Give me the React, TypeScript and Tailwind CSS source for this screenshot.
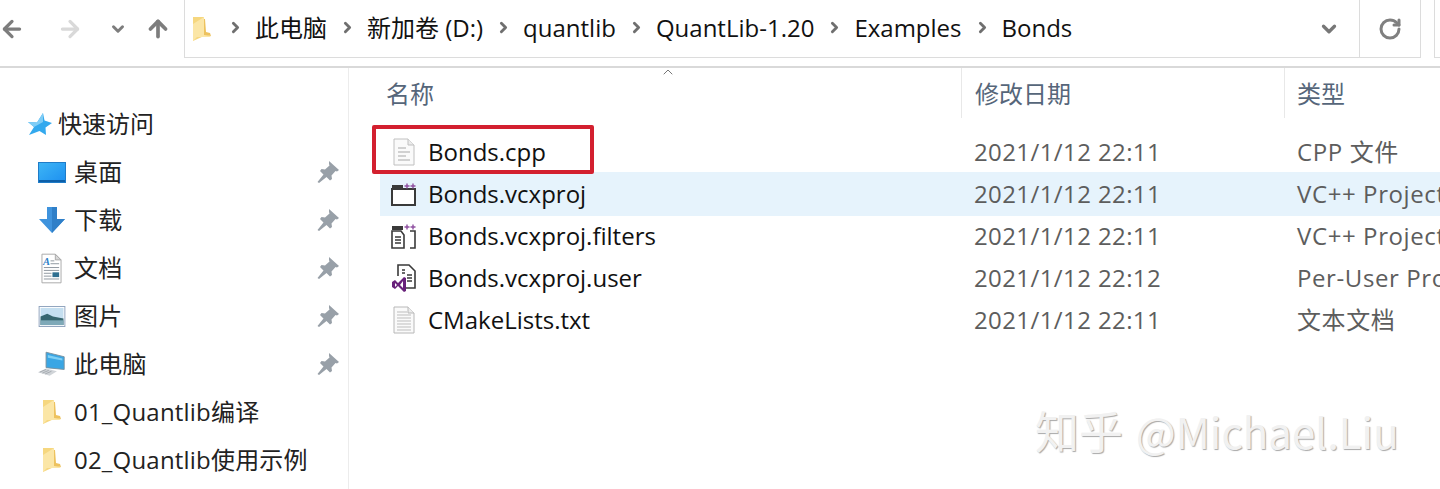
import { ArrowLeft, ArrowRight, ArrowUp, ChevronDown, ChevronRight, RotateCw } from "lucide-react";

const uiFont = "font-['Open_Sans','Noto_Sans_CJK_SC',sans-serif]";

function FolderIcon({ className = "" }: { className?: string }) {
  return (
    <svg viewBox="0 0 20 26" className={className}>
      <path d="M1 1h11v19l-11 5z" fill="#f6d77f" />
      <path d="M12 1l1 16 6 4H5l-4 4V8z" fill="#fbe6a6" />
      <path d="M12 3v16l7 1-1-3-4-1-1-13z" fill="#edc25e" />
    </svg>
  );
}

function PinIcon() {
  return (
    <svg viewBox="0 0 22 22" className="h-[22px] w-[22px]">
      <path d="M12 0l10 9-2 1.5-1.5-.5-4 4.5.5 3.500-2 1.500-3.500-3.500-7.500 6-1.500-1 6-7.500-3.500-3.500 1.500-2 3.500.5 4.500-4-.5-1.500z" fill="#98a0a8" />
    </svg>
  );
}

function StarIcon() {
  return (
    <svg viewBox="0 0 24 23" className="h-[23px] w-[24px]">
      <path d="M15 0l1.5 7.5L24 10l-6.5 4.500L18 22l-6.500-4L1 22l5-8-6-5 9 .5z" fill="#33a9ee" />
      <path d="M15 0L9 9.500 0 9l6 5 9-5z" fill="#7fcdf6" />
    </svg>
  );
}

function DesktopIcon() {
  return (
    <div className="flex h-[21px] w-[28px] flex-col justify-end bg-gradient-to-br from-[#3db5f5] to-[#1d8ff0] border border-[#1f7cc8]">
      <div className="h-[2px] bg-[#0d5fa8]" />
    </div>
  );
}

function DownloadIcon() {
  return (
    <svg viewBox="0 0 26 26" className="h-[26px] w-[26px]">
      <path d="M8 0h10v12h8L13 26 0 12h8z" fill="#3f93dd" />
      <path d="M13 0h5v12h8L13 26z" fill="#2f7fc8" />
    </svg>
  );
}

function DocIcon() {
  return (
    <svg viewBox="0 0 22 32" className="h-[31px] w-[21px]">
      <path d="M1 1h14l6 6v24H1z" fill="#fff" stroke="#a9a9a9" />
      <path d="M15 1v6h6z" fill="#d8d8d8" stroke="#a9a9a9" />
      <text x="2" y="12" fontSize="11" fontStyle="italic" fontWeight="700" fill="#2f7fc8" fontFamily="Liberation Serif">A</text>
      <path d="M10 8h4M10 11h9M3 15h16M3 18h16M3 21h8M3 24h8M3 27h16" stroke="#8c949c" strokeWidth="1" />
      <path d="M12 20h7v5h-7z" fill="#2f6f90" />
    </svg>
  );
}

function PictureIcon() {
  return (
    <svg viewBox="0 0 28 22" className="h-[21px] w-[28px]">
      <rect x="0.5" y="0.5" width="27" height="21" fill="#fff" stroke="#8fa3bd" />
      <rect x="2" y="2" width="24" height="18" fill="#c5dff0" />
      <path d="M2 11l7-3 6 3 11 2v7H2z" fill="#37666f" />
      <path d="M2 15h24v5H2z" fill="#7ea9b8" />
    </svg>
  );
}

function ComputerIcon() {
  return (
    <svg viewBox="0 0 32 28" className="h-[28px] w-[32px]">
      <path d="M10 1l20 5v14l-20-2z" fill="#3aa6e4" stroke="#7a8f9c" />
      <path d="M12 4l16 4v2l-16-3z" fill="#7fd0f5" />
      <path d="M1 23l9-4 12 3-8 5z" fill="#d0d4d8" />
      <path d="M3 23l7-3M6 24l7-3M9 25l7-3" stroke="#a2a8ad" />
    </svg>
  );
}

function CppIcon() {
  return (
    <svg viewBox="0 0 22 28" className="h-[28px] w-[22px]">
      <path d="M1 1h14l6 6v20H1z" fill="#fafafa" stroke="#c0c0c0" />
      <path d="M15 1v6h6" fill="#ececec" stroke="#c0c0c0" />
      <path d="M5 10h8M5 14h12M5 18h8M5 22h12" stroke="#c4c4c4" strokeWidth="1.5" />
    </svg>
  );
}

function TextIcon() {
  return (
    <svg viewBox="0 0 22 28" className="h-[28px] w-[22px]">
      <path d="M1 1h14l6 6v20H1z" fill="#fafafa" stroke="#b8b8b8" />
      <path d="M15 1v6h6" fill="#ececec" stroke="#b8b8b8" />
      <path d="M4 6h10M4 9h14M4 12h14M4 15h14M4 18h14M4 21h14M4 24h14" stroke="#bdbdbd" />
    </svg>
  );
}

function PlusMarks() {
  return <path d="M16 1.5v5M13.5 4h5M22 1.5v5M19.5 4h5" stroke="#8e4fa0" strokeWidth="1.4" />;
}

function ProjIcon() {
  return (
    <svg viewBox="0 0 26 24" className="h-[24px] w-[26px]">
      <rect x="1" y="7" width="23" height="16" fill="#fff" stroke="#3a3a3a" strokeWidth="2" />
      <path d="M1 3h11v5H1z" fill="#3a3a3a" />
      <PlusMarks />
    </svg>
  );
}

function FiltersIcon() {
  return (
    <svg viewBox="0 0 26 26" className="h-[26px] w-[26px]">
      <path d="M1 3h11v4H1z" fill="#3a3a3a" />
      <path d="M1 8v17h12V12l-3-4z" fill="#fff" stroke="#3a3a3a" strokeWidth="1.6" />
      <path d="M4 14h6M4 17h6M4 20h6" stroke="#3a3a3a" strokeWidth="1.5" />
      <path d="M19 8h5v17h-5" fill="none" stroke="#3a3a3a" strokeWidth="1.6" />
      <PlusMarks />
    </svg>
  );
}

function UserIcon() {
  return (
    <svg viewBox="0 0 26 28" className="h-[28px] w-[26px]">
      <path d="M7 12V1h11l6 6v17h-9" fill="#fff" stroke="#3a3a3a" strokeWidth="1.6" />
      <path d="M11 9h3M11 6h3M16 11h5M16 14h5M16 17h5" stroke="#3a3a3a" strokeWidth="1.5" />
      <path d="M1 18l3-2 3 3 6-6 2 1v13l-2 1-6-6-3 3-3-2z" fill="#68217a" />
      <path d="M4 19v4l2-2zM12 17l-3 4 3 3z" fill="#fff" />
    </svg>
  );
}

const navItems = [
  { label: "桌面", icon: <DesktopIcon />, pinned: true },
  { label: "下载", icon: <DownloadIcon />, pinned: true },
  { label: "文档", icon: <DocIcon />, pinned: true },
  { label: "图片", icon: <PictureIcon />, pinned: true },
  { label: "此电脑", icon: <ComputerIcon />, pinned: true },
  { label: "01_Quantlib编译", icon: <FolderIcon className="h-[26px] w-[20px]" />, pinned: false },
  { label: "02_Quantlib使用示例", icon: <FolderIcon className="h-[26px] w-[20px]" />, pinned: false },
];

const files = [
  { name: "Bonds.cpp", date: "2021/1/12 22:11", type: "CPP 文件", icon: <CppIcon />, selected: false },
  { name: "Bonds.vcxproj", date: "2021/1/12 22:11", type: "VC++ Project", icon: <ProjIcon />, selected: true },
  { name: "Bonds.vcxproj.filters", date: "2021/1/12 22:11", type: "VC++ Project", icon: <FiltersIcon />, selected: false },
  { name: "Bonds.vcxproj.user", date: "2021/1/12 22:12", type: "Per-User Project", icon: <UserIcon />, selected: false },
  { name: "CMakeLists.txt", date: "2021/1/12 22:11", type: "文本文档", icon: <TextIcon />, selected: false },
];

const crumbs = ["此电脑", "新加卷 (D:)", "quantlib", "QuantLib-1.20", "Examples", "Bonds"];

export default function App() {
  return (
    <div className={`relative flex h-[489px] w-[1440px] flex-col overflow-hidden bg-white text-[24px] text-[#111] ${uiFont}`}>
      <header className="flex h-[68px] shrink-0 items-start border-b-2 border-[#d9d9d9]">
        <div className="flex h-[57px] w-[184px] shrink-0 items-center text-[#7d7d7d]">
          <ArrowLeft size={26} strokeWidth={3} className="-ml-[1px]" />
          <ArrowRight size={26} strokeWidth={3} className="ml-[32px] text-[#d9d9d9]" />
          <ChevronDown size={18} strokeWidth={4} className="ml-[26px]" />
          <ArrowUp size={26} strokeWidth={3.4} className="ml-[18px]" />
        </div>
        <div className="flex h-[58px] w-[1237px] shrink-0 items-center border-x border-b border-[#dcdcdc]">
          <FolderIcon className="ml-[7px] h-[26px] w-[20px]" />
          <div className="ml-[15px] flex flex-1 items-center gap-[12px] -translate-y-[1px]">
            {crumbs.map((crumb) => (
              <div key={crumb} className="flex items-center gap-[11px]">
                <ChevronRight size={17} strokeWidth={4} className="text-[#6f6f6f]" />
                <span className="whitespace-nowrap leading-[32px]">{crumb}</span>
              </div>
            ))}
          </div>
          <div className="flex w-[61px] justify-center text-[#777]">
            <ChevronDown size={22} strokeWidth={3.6} />
          </div>
          <div className="flex h-full w-[61px] items-center justify-center border-l border-[#dcdcdc] text-[#808080]">
            <RotateCw size={24} strokeWidth={3} />
          </div>
        </div>
        <div className="ml-[13px] h-[58px] flex-1 border-b border-l border-[#dcdcdc]" />
      </header>

      <div className="flex min-h-0 flex-1">
        <aside className="flex w-[349px] shrink-0 flex-col border-r border-[#ececec] pt-[32px]">
          <div className="flex h-[48px] items-center pl-[28px]">
            <StarIcon />
            <span className="ml-[6px] text-[#222]">快速访问</span>
          </div>
          {navItems.map((item) => (
            <div key={item.label} className="flex h-[48px] shrink-0 items-center pl-[37px] pr-[9px]">
              <div className="flex w-[37px] shrink-0 justify-center pr-[8px]">{item.icon}</div>
              <span className="flex-1 whitespace-nowrap tracking-[0.2px] text-[#222]">{item.label}</span>
              {item.pinned && <PinIcon />}
            </div>
          ))}
        </aside>

        <main className="relative flex min-w-0 flex-1 flex-col">
          <div className="flex h-[50px] shrink-0 items-center text-[#56667a]">
            <div className="relative flex h-full w-[613px] shrink-0 items-center border-r border-[#e8e8e8] pl-[37px] pt-[2px]">
              名称
              <ChevronDown size={16} strokeWidth={1.5} className="absolute left-[311px] -top-[4px] rotate-180 text-[#777]" />
            </div>
            <div className="flex h-full w-[323px] shrink-0 items-center border-r border-[#e8e8e8] pl-[13px] pt-[2px]">修改日期</div>
            <div className="flex h-full flex-1 items-center pl-[12px] pt-[2px]">类型</div>
          </div>

          <div className="mt-[13px] flex flex-col pl-[31px]">
            {files.map((file) => (
              <div key={file.name} className={`flex items-center ${file.selected ? "-my-[1px] h-[44px] bg-[#e6f3fc]" : "h-[42px]"}`}>
                <div className="flex w-[48px] shrink-0 justify-center">{file.icon}</div>
                <span className="w-[546px] shrink-0 whitespace-nowrap">{file.name}</span>
                <span className="w-[323px] shrink-0 whitespace-nowrap tracking-[0.4px] text-[#5d5d5d]">{file.date}</span>
                <span className="whitespace-nowrap tracking-[0.6px] text-[#5d5d5d]">{file.type}</span>
              </div>
            ))}
          </div>
          <div className="absolute left-[23px] top-[57px] h-[49px] w-[222px] rounded-[2px] border-[4px] border-[#d3202f]" />
        </main>
      </div>

      <div className="absolute left-[1035px] top-[402px] flex items-baseline gap-[13px] whitespace-nowrap leading-[56px] text-[#f1f1f1] [text-shadow:1px_1px_1px_#a8a8a8] font-['Noto_Sans_CJK_SC',sans-serif]">
        <span className="text-[44px]">知乎</span>
        <span className="text-[42px]">@Michael.Liu</span>
      </div>
    </div>
  );
}
